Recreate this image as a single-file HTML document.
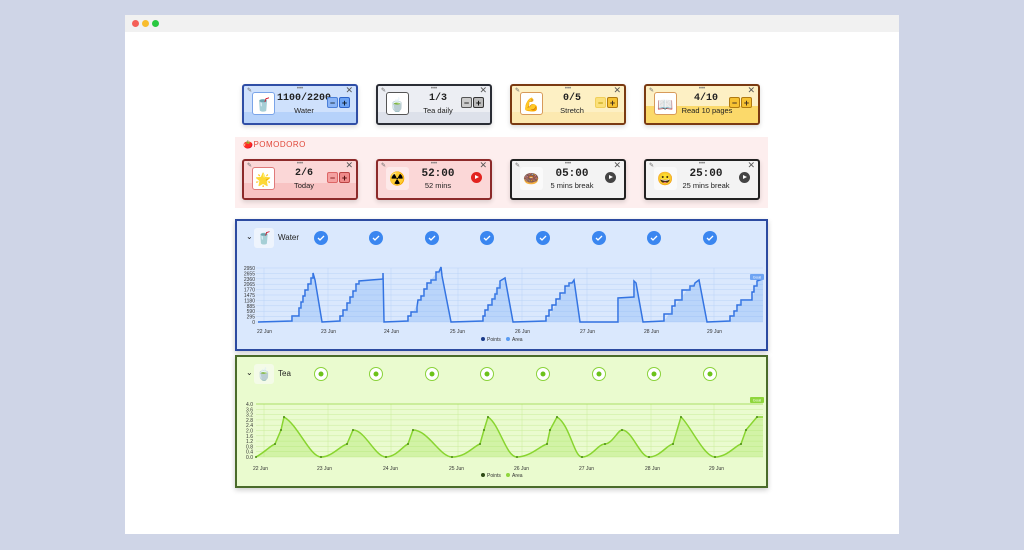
<!DOCTYPE html>
<html><head><meta charset="utf-8"><style>
*{box-sizing:border-box;margin:0;padding:0}
body{width:1024px;height:550px;background:#cfd5e7;font-family:"Liberation Sans","Noto Sans CJK JP",sans-serif;position:relative;overflow:hidden}
.win{position:absolute;left:125px;top:15px;width:774px;height:519px;background:#fff}
.bar{position:absolute;left:0;top:0;width:774px;height:17px;background:#f1f1f1}
.dot{position:absolute;top:5px;width:7px;height:7px;border-radius:50%}
.card{position:absolute;width:116px;height:41px;border:2px solid;border-radius:3px;box-shadow:0 2px 5px rgba(0,0,0,.15);overflow:hidden}
.card .low{position:absolute;left:0;right:0;bottom:0;height:11px}
.ic{position:absolute;left:8px;top:6px;width:23px;height:23px;border-radius:3px;background:#fff;font-size:13px;text-align:center;line-height:23px}
.t1{position:absolute;left:30px;right:22px;top:7px;text-align:center;font-family:"Liberation Mono",monospace;font-weight:bold;font-size:10px;color:#222}
.t2{position:absolute;left:30px;right:22px;top:20px;text-align:center;font-size:7.5px;color:#222}
.x{position:absolute;right:3px;top:-1px;font-size:9px;color:#555}
.ed{position:absolute;left:3px;top:1px;font-size:6px;color:#666}
.dd{position:absolute;left:0;right:0;top:0;text-align:center;font-size:6px;color:#777}
.bt{position:absolute;top:11px;width:11px;height:11px;border-radius:2px;font-size:9px;line-height:10px;text-align:center;font-weight:bold}
.play{position:absolute;right:8px;top:11px;width:11px;height:11px;border-radius:50%}
.play:after{content:"";position:absolute;left:4px;top:3px;border-left:4px solid #fff;border-top:2.5px solid transparent;border-bottom:2.5px solid transparent}
.panel{position:absolute;left:110px;width:533px;border:2px solid}
</style></head><body>
<div class="win">
<div class="bar"><div class="dot" style="left:7px;background:#f45f57"></div><div class="dot" style="left:17px;background:#f8bd2e"></div><div class="dot" style="left:27px;background:#29c840"></div></div>
</div>

<div class="card" style="left:242px;top:84px;border-color:#2f4ea6;background:#cfe1fc"><div class="low" style="background:#b6d2fa"></div><div class="ed">✎</div><div class="dd">•••</div><div class="x">✕</div><div class="ic" style="border:1px solid #7aa4e8">🥤</div><div class="t1">1100/2200</div><div class="t2">Water</div><div class="bt" style="right:18px;border:1px solid #4a7fd8;background:#8ab4f5;color:#234">−</div><div class="bt" style="right:6px;border:1px solid #2c63c9;background:#6ea4f3;color:#123">+</div></div>
<div class="card" style="left:376px;top:84px;border-color:#2a2d35;background:#eceef3"><div class="low" style="background:#dde1ea"></div><div class="ed">✎</div><div class="dd">•••</div><div class="x">✕</div><div class="ic" style="border:1px solid #555">🍵</div><div class="t1">1/3</div><div class="t2">Tea daily</div><div class="bt" style="right:18px;border:1px solid #555;background:#ccc;color:#222">−</div><div class="bt" style="right:6px;border:1px solid #333;background:#bbb;color:#111">+</div></div>
<div class="card" style="left:510px;top:84px;border-color:#7a3a12;background:#fdf0c4"><div class="low" style="background:#fce9b0"></div><div class="ed">✎</div><div class="dd">•••</div><div class="x">✕</div><div class="ic" style="border:1px solid #d79a5a">💪</div><div class="t1">0/5</div><div class="t2">Stretch</div><div class="bt" style="right:18px;border:1px solid #f0cf5a;background:#fbe07a;color:#b90">−</div><div class="bt" style="right:6px;border:1px solid #b07a10;background:#f6c232;color:#432">+</div></div>
<div class="card" style="left:644px;top:84px;border-color:#7a3a12;background:#fdf0c4"><div class="low" style="background:#fbd96a;height:17px"></div><div class="ed">✎</div><div class="dd">•••</div><div class="x">✕</div><div class="ic" style="border:1px solid #d79a5a">📖</div><div class="t1">4/10</div><div class="t2" style="left:28px;right:18px">Read 10 pages</div><div class="bt" style="right:18px;border:1px solid #b07a10;background:#f6c232;color:#432">−</div><div class="bt" style="right:6px;border:1px solid #b07a10;background:#f6c232;color:#432">+</div></div>

<div style="position:absolute;left:235px;top:137px;width:533px;height:71px;background:#fdeeee"></div>
<div style="position:absolute;left:243px;top:140px;font-size:8px;color:#e0483a;letter-spacing:.5px">🍅POMODORO</div>
<div class="card" style="left:242px;top:159px;border-color:#8c2a2a;background:#fbd7d7"><div class="low" style="background:#f8c3c3;height:15px"></div><div class="ed">✎</div><div class="dd">•••</div><div class="x">✕</div><div class="ic" style="border:1px solid #e07a7a">🌟</div><div class="t1">2/6</div><div class="t2">Today</div><div class="bt" style="right:18px;border:1px solid #d66;background:#f4a0a0;color:#822">−</div><div class="bt" style="right:6px;border:1px solid #b44;background:#ef8a8a;color:#511">+</div></div>
<div class="card" style="left:376px;top:159px;border-color:#8c2a2a;background:#fbd7d7"><div class="ed">✎</div><div class="dd">•••</div><div class="x">✕</div><div class="ic" style="background:#fde9e9">☢️</div><div class="t1" style="font-size:11px">52:00</div><div class="t2">52 mins</div><div class="play" style="background:#e2231f"></div></div>
<div class="card" style="left:510px;top:159px;border-color:#222;background:#f3f3f3"><div class="ed">✎</div><div class="dd">•••</div><div class="x">✕</div><div class="ic" style="background:#fafafa">🍩</div><div class="t1" style="font-size:11px">05:00</div><div class="t2">5 mins break</div><div class="play" style="background:#444"></div></div>
<div class="card" style="left:644px;top:159px;border-color:#222;background:#f3f3f3"><div class="ed">✎</div><div class="dd">•••</div><div class="x">✕</div><div class="ic" style="background:#fafafa">😀</div><div class="t1" style="font-size:11px">25:00</div><div class="t2">25 mins break</div><div class="play" style="background:#444"></div></div>

<div class="panel" style="left:235px;top:219px;height:132px;border-color:#2c4aa0;background:#dae8fd;box-shadow:0 2px 5px rgba(0,0,0,.2)"></div>
<div style="position:absolute;left:246px;top:232px;font-size:8px;color:#222">⌄</div>
<div style="position:absolute;left:254px;top:228px;width:20px;height:20px;background:#eef4fd;border-radius:3px;font-size:12px;text-align:center;line-height:20px">🥤</div>
<div style="position:absolute;left:278px;top:233px;font-size:8px;color:#222">Water</div>
<div class="panel" style="left:235px;top:355px;height:133px;border-color:#4a6b2a;background:#eafbcf;box-shadow:0 2px 5px rgba(0,0,0,.2)"></div>
<div style="position:absolute;left:246px;top:368px;font-size:8px;color:#222">⌄</div>
<div style="position:absolute;left:254px;top:364px;width:20px;height:20px;background:#f4fbe8;border-radius:3px;font-size:12px;text-align:center;line-height:20px">🍵</div>
<div style="position:absolute;left:278px;top:369px;font-size:8px;color:#222">Tea</div>

<svg width="1024" height="550" style="position:absolute;left:0;top:0" font-family="Liberation Sans, sans-serif">
<g fill="#3a86f0"><circle cx="321" cy="238" r="7"/><circle cx="376" cy="238" r="7"/><circle cx="432" cy="238" r="7"/><circle cx="487" cy="238" r="7"/><circle cx="543" cy="238" r="7"/><circle cx="599" cy="238" r="7"/><circle cx="654" cy="238" r="7"/><circle cx="710" cy="238" r="7"/></g>
<g stroke="#fff" stroke-width="1.3" fill="none">
<path d="M318,238 l2,2 l4,-4"/><path d="M373,238 l2,2 l4,-4"/><path d="M429,238 l2,2 l4,-4"/><path d="M484,238 l2,2 l4,-4"/><path d="M540,238 l2,2 l4,-4"/><path d="M596,238 l2,2 l4,-4"/><path d="M651,238 l2,2 l4,-4"/><path d="M707,238 l2,2 l4,-4"/></g>
<g fill="#fff" stroke="#8ad23a" stroke-width="1"><circle cx="321" cy="374" r="6.5"/><circle cx="376" cy="374" r="6.5"/><circle cx="432" cy="374" r="6.5"/><circle cx="487" cy="374" r="6.5"/><circle cx="543" cy="374" r="6.5"/><circle cx="599" cy="374" r="6.5"/><circle cx="654" cy="374" r="6.5"/><circle cx="710" cy="374" r="6.5"/></g>
<g fill="#6cc21a"><circle cx="321" cy="374" r="2.5"/><circle cx="376" cy="374" r="2.5"/><circle cx="432" cy="374" r="2.5"/><circle cx="487" cy="374" r="2.5"/><circle cx="543" cy="374" r="2.5"/><circle cx="599" cy="374" r="2.5"/><circle cx="654" cy="374" r="2.5"/><circle cx="710" cy="374" r="2.5"/></g>
<g stroke="#b9d3f7" stroke-width=".5">
<path d="M256,268H763M256,273.4H763M256,278.8H763M256,284.2H763M256,289.6H763M256,295H763M256,300.4H763M256,305.8H763M256,311.2H763M256,316.6H763M256,322H763"/>
<path d="M264,268V322M328,268V322M391,268V322M458,268V322M522,268V322M587,268V322M651,268V322M714,268V322"/>
</g>
<g font-size="5" fill="#333" text-anchor="end">
<text x="255" y="270">2950</text><text x="255" y="275.4">2655</text><text x="255" y="280.8">2360</text><text x="255" y="286.2">2065</text><text x="255" y="291.6">1770</text><text x="255" y="297">1475</text><text x="255" y="302.4">1180</text><text x="255" y="307.8">885</text><text x="255" y="313.2">590</text><text x="255" y="318.6">295</text><text x="255" y="324">0</text></g>
<g font-size="5" fill="#333"><text x="257" y="333">22 Jun</text><text x="321" y="333">23 Jun</text><text x="384" y="333">24 Jun</text><text x="450" y="333">25 Jun</text><text x="515" y="333">26 Jun</text><text x="580" y="333">27 Jun</text><text x="644" y="333">28 Jun</text><text x="707" y="333">29 Jun</text>
<circle cx="483" cy="339" r="2" fill="#1b3a8a"/><text x="487" y="341">Points</text><circle cx="508" cy="339" r="2" fill="#5b9cf2"/><text x="512" y="341">Area</text></g>
<path d="M258,322 L292,321 L292,316 L299,316 L299,308 L301,308 L301,302 L303,302 L303,296 L305,296 L305,290 L308,290 L308,284 L311,284 L311,278 L313,278 L313,273 L315,280 L322,322 L340,321 L340,316 L343,316 L343,310 L347,310 L347,303 L350,303 L350,297 L353,297 L353,291 L356,291 L356,284 L359,284 L359,281 L383,279 L383,273 L384,322 L408,321 L408,316 L411,316 L411,312 L417,312 L417,307 L418,300 L421,300 L421,296 L424,296 L424,289 L427,289 L427,283 L431,283 L431,280 L436,280 L436,272 L439,272 L441,267 L442,276 L451,322 L483,321 L483,316 L485,316 L485,310 L488,310 L488,305 L492,305 L492,299 L495,299 L495,294 L497,294 L497,288 L500,288 L500,281 L505,278 L513,322 L546,321 L546,316 L549,316 L549,310 L552,310 L552,305 L556,305 L556,299 L560,299 L560,293 L565,293 L565,286 L569,286 L569,283 L572,283 L574,280 L580,322 L618,322 L618,298 L634,297 L634,281 L636,283 L643,322 L664,321 L664,314 L672,314 L672,306 L675,306 L675,300 L682,300 L682,290 L690,290 L690,286 L694,286 L695,283 L699,280 L707,322 L730,321 L730,316 L734,316 L734,311 L737,311 L737,305 L741,305 L741,300 L752,300 L752,292 L754,292 L754,286 L757,286 L757,281 L763,279" fill="none" stroke="#2f6fe0" stroke-width="1.5"/>
<path d="M258,322 L292,321 L292,316 L299,316 L299,308 L305,296 L311,278 L313,273 L315,280 L322,322 L340,321 L359,281 L383,279 L383,273 L384,322 L408,321 L431,280 L441,267 L442,276 L451,322 L483,321 L500,281 L505,278 L513,322 L546,321 L569,283 L574,280 L580,322 L618,322 L618,298 L634,297 L634,281 L636,283 L643,322 L664,321 L690,286 L699,280 L707,322 L730,321 L741,300 L752,300 L757,281 L763,279 L763,322Z" fill="#5b9cf2" opacity=".25"/>
<rect x="750" y="274" width="14" height="6" rx="1" fill="#6ea4f3"/><text x="757" y="278.5" font-size="4" fill="#fff" text-anchor="middle">Goal</text>

<g stroke="#c9ec9a" stroke-width=".5">
<path d="M256,404H763M256,409.3H763M256,414.6H763M256,419.9H763M256,425.2H763M256,430.5H763M256,435.8H763M256,441.1H763M256,446.4H763M256,451.7H763M256,457H763"/>
<path d="M264,404V457M328,404V457M391,404V457M458,404V457M522,404V457M587,404V457M651,404V457M714,404V457"/>
</g>
<path d="M256,404H763" stroke="#9bd84a" stroke-width=".8"/>
<g font-size="5" fill="#333" text-anchor="end">
<text x="253" y="406">4.0</text><text x="253" y="411.3">3.6</text><text x="253" y="416.6">3.2</text><text x="253" y="421.9">2.8</text><text x="253" y="427.2">2.4</text><text x="253" y="432.5">2.0</text><text x="253" y="437.8">1.6</text><text x="253" y="443.1">1.2</text><text x="253" y="448.4">0.8</text><text x="253" y="453.7">0.4</text><text x="253" y="459">0.0</text></g>
<g font-size="5" fill="#333"><text x="253" y="470">22 Jun</text><text x="317" y="470">23 Jun</text><text x="383" y="470">24 Jun</text><text x="449" y="470">25 Jun</text><text x="514" y="470">26 Jun</text><text x="579" y="470">27 Jun</text><text x="645" y="470">28 Jun</text><text x="709" y="470">29 Jun</text>
<circle cx="483" cy="475" r="2" fill="#2d4a14"/><text x="487" y="477">Points</text><circle cx="508" cy="475" r="2" fill="#8fd63c"/><text x="512" y="477">Area</text></g>
<path d="M256,457 C265,452 270,446 275,444 L281,430 L284,417 C298,425 310,457 321,457 C332,457 340,446 347,444 L353,430 C365,430 375,457 386,457 C396,457 403,446 408,444 L413,430 C428,430 440,457 452,457 C466,457 474,446 480,444 L484,430 L488,417 C500,425 506,457 517,457 C530,457 540,446 547,444 L550,430 L557,417 C570,425 574,457 582,457 C592,457 598,444 605,444 C612,444 618,430 622,430 C632,430 640,457 649,457 C660,457 668,444 673,444 L681,417 C690,425 704,457 715,457 C727,457 735,446 741,444 L746,430 L757,417 L763,417" fill="none" stroke="#86d32c" stroke-width="1.5"/>
<path d="M256,457 C265,452 270,446 275,444 L281,430 L284,417 C298,425 310,457 321,457 C332,457 340,446 347,444 L353,430 C365,430 375,457 386,457 C396,457 403,446 408,444 L413,430 C428,430 440,457 452,457 C466,457 474,446 480,444 L484,430 L488,417 C500,425 506,457 517,457 C530,457 540,446 547,444 L550,430 L557,417 C570,425 574,457 582,457 C592,457 598,444 605,444 C612,444 618,430 622,430 C632,430 640,457 649,457 C660,457 668,444 673,444 L681,417 C690,425 704,457 715,457 C727,457 735,446 741,444 L746,430 L757,417 L763,417 L763,457Z" fill="#9be04a" opacity=".3"/>
<g fill="#4a8a14"><circle cx="256" cy="457" r="1"/><circle cx="275" cy="444" r="1"/><circle cx="281" cy="430" r="1"/><circle cx="284" cy="417" r="1"/><circle cx="321" cy="457" r="1"/><circle cx="347" cy="444" r="1"/><circle cx="353" cy="430" r="1"/><circle cx="386" cy="457" r="1"/><circle cx="408" cy="444" r="1"/><circle cx="413" cy="430" r="1"/><circle cx="452" cy="457" r="1"/><circle cx="480" cy="444" r="1"/><circle cx="484" cy="430" r="1"/><circle cx="488" cy="417" r="1"/><circle cx="517" cy="457" r="1"/><circle cx="547" cy="444" r="1"/><circle cx="550" cy="430" r="1"/><circle cx="557" cy="417" r="1"/><circle cx="582" cy="457" r="1"/><circle cx="605" cy="444" r="1"/><circle cx="622" cy="430" r="1"/><circle cx="649" cy="457" r="1"/><circle cx="673" cy="444" r="1"/><circle cx="681" cy="417" r="1"/><circle cx="715" cy="457" r="1"/><circle cx="741" cy="444" r="1"/><circle cx="746" cy="430" r="1"/><circle cx="757" cy="417" r="1"/></g>
<rect x="750" y="397" width="14" height="6" rx="1" fill="#8fd63c"/><text x="757" y="401.5" font-size="4" fill="#fff" text-anchor="middle">Goal</text>
</svg>
</body></html>
